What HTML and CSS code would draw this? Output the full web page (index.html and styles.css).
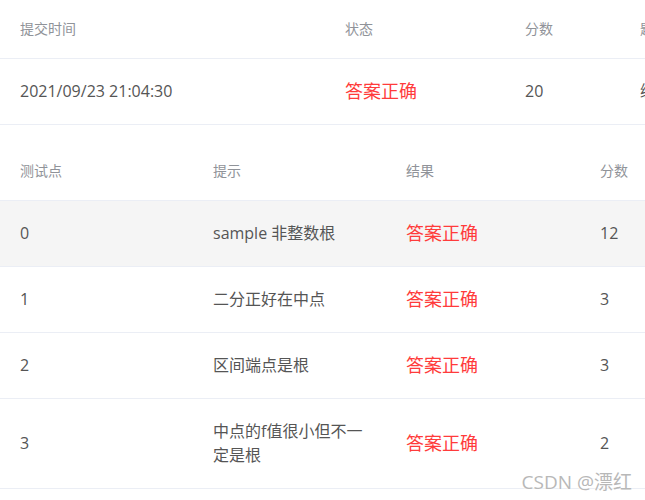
FILE: index.html
```html
<!DOCTYPE html>
<html lang="zh-CN">
<head>
<meta charset="utf-8">
<link rel="stylesheet" href="styles.css">
</head>
<body>
<div class="page">
  <table class="tbl tbl-submit">
    <colgroup>
      <col class="c-time"><col class="c-state"><col class="c-score"><col class="c-rest">
    </colgroup>
    <thead>
      <tr><th>提交时间</th><th>状态</th><th>分数</th><th>题目</th></tr>
    </thead>
    <tbody>
      <tr><td>2021/09/23 21:04:30</td><td class="ok">答案正确</td><td>20</td><td>编程题</td></tr>
    </tbody>
  </table>

  <table class="tbl tbl-cases">
    <colgroup>
      <col class="c-a"><col class="c-b"><col class="c-c"><col class="c-d">
    </colgroup>
    <thead>
      <tr><th>测试点</th><th>提示</th><th>结果</th><th>分数</th></tr>
    </thead>
    <tbody>
      <tr class="hover"><td>0</td><td>sample 非整数根</td><td class="ok">答案正确</td><td>12</td></tr>
      <tr><td>1</td><td>二分正好在中点</td><td class="ok">答案正确</td><td>3</td></tr>
      <tr><td>2</td><td>区间端点是根</td><td class="ok">答案正确</td><td>3</td></tr>
      <tr><td>3</td><td>中点的f值很小但不一定是根</td><td class="ok">答案正确</td><td>2</td></tr>
    </tbody>
  </table>
  <div class="watermark">CSDN @漂红</div>
</div>
</body>
</html>
```

FILE: styles.css
```css
html, body {
  margin: 0;
  padding: 0;
  background: #fff;
  overflow: hidden;
}
.page {
  position: relative;
  width: 645px;
  height: 500px;
  overflow: hidden;
  font-family: "Open Sans", "Noto Sans CJK SC", sans-serif;
}
.tbl {
  border-collapse: collapse;
  table-layout: fixed;
  width: 760px;
}
.tbl th, .tbl td {
  text-align: left;
  vertical-align: middle;
  padding: 20px;
  line-height: 24px;
  border-bottom: 1px solid #ebeef5;
  white-space: normal;
  word-break: break-all;
}
.tbl th {
  font-weight: normal;
  font-size: 14px;
  color: #909399;
  padding-top: 17px;
  padding-bottom: 17px;
}
.tbl td {
  font-size: 16px;
  color: #555;
  padding-top: 20px;
  padding-bottom: 21px;
}
.tbl td.ok {
  color: #ff3b3b;
  font-size: 18px;
}
.c-time { width: 325px; }
.c-state { width: 180px; }
.c-score { width: 115px; }
.c-rest { width: 140px; }
.tbl-cases { margin-top: 17px; }
.c-a { width: 193px; }
.c-b { width: 193px; }
.c-c { width: 194px; }
.c-d { width: 180px; }
.tbl tr.hover td { background: #f5f5f5; }
.watermark {
  position: absolute;
  right: 13px;
  top: 468px;
  font-size: 19px;
  line-height: 28px;
  color: #b8b8b8;
  text-shadow: 0 0 2px #fff, 0 0 2px #fff;
}
```
